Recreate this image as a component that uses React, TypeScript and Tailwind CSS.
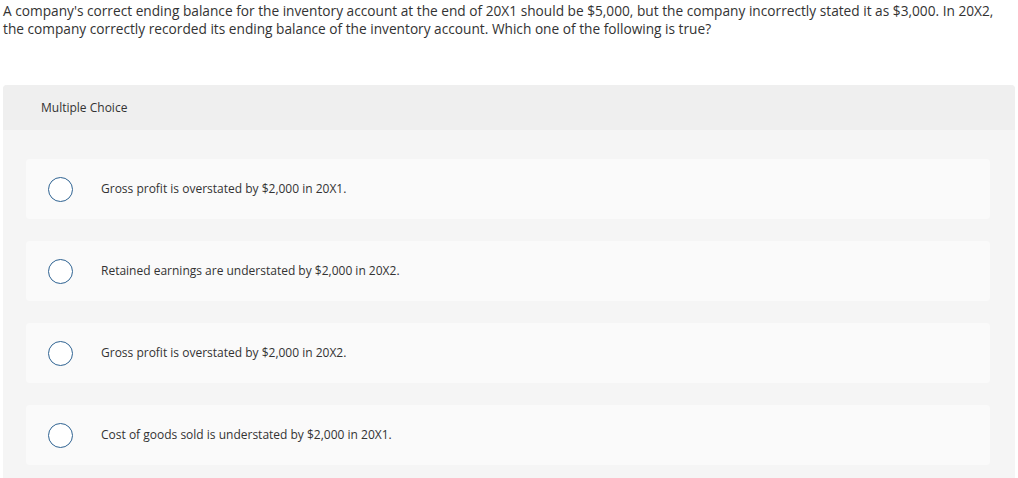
import React from "react";

const options = [
  "Gross profit is overstated by $2,000 in 20X1.",
  "Retained earnings are understated by $2,000 in 20X2.",
  "Gross profit is overstated by $2,000 in 20X2.",
  "Cost of goods sold is understated by $2,000 in 20X1.",
];

export default function App() {
  return (
    <div className="w-[1018px] h-[478px] overflow-hidden bg-white text-[#333333]" style={{ fontFamily: '"Open Sans", "Liberation Sans", sans-serif' }}>
      <p className="pl-[3px] pr-2 pt-[2px] text-[13.7px] leading-[18px]">
        A company's correct ending balance for the inventory account at the end of 20X1 should be $5,000, but the company incorrectly stated it as $3,000. In 20X2, the company correctly recorded its ending balance of the inventory account. Which one of the following is true?
      </p>
      <div className="ml-[3px] mr-[3px] mt-[47px] rounded-t-[4px] bg-[#f5f5f5]">
        <div className="h-[45px] rounded-t-[4px] bg-[#efefef] flex items-center pl-[38px] text-[12px]">Multiple Choice</div>
        <div className="pt-[29px] pl-[23px] pr-[25px] flex flex-col gap-[22px] pb-[20px]">
          {options.map((o) => (
            <div key={o} className="h-[60px] rounded-[4px] bg-[#fafafa] flex items-center">
              <span className="ml-[22px] w-[25px] h-[25px] rounded-full border-[1.5px] border-[#2f6392] bg-white shrink-0" />
              <span className="ml-[28px] text-[12px]">{o}</span>
            </div>
          ))}
        </div>
      </div>
    </div>
  );
}
